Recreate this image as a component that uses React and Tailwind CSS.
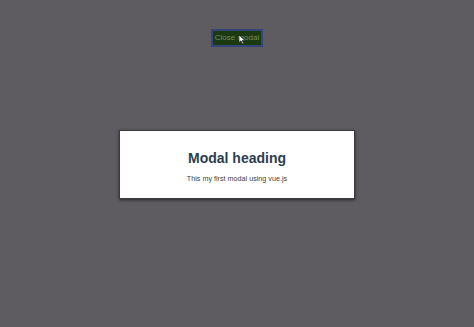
export default function App() {
  return (
    <div
      className="relative h-[327px] w-[474px] overflow-hidden bg-[#5f5c61]"
      style={{ fontFamily: '"Liberation Sans", Arial, sans-serif' }}
    >
      <div className="flex justify-center pt-[29px]">
        <button className="relative h-[18px] w-[52px] border-2 border-[#34457a] bg-[#1c3a12] text-[8px] leading-none text-[#6f8a62]">
          Close modal
          <svg
            className="absolute left-[25px] top-[3px]"
            width="8"
            height="11"
            viewBox="0 0 8 11"
          >
            <path
              d="M1 1 L1 8.5 L3 6.8 L4.5 10 L5.6 9.5 L4.2 6.4 L6.8 6.4 Z"
              fill="#ffffff"
              stroke="#222"
              strokeWidth="0.7"
            />
          </svg>
        </button>
      </div>

      <div className="absolute left-[119px] top-[130px] flex h-[69px] w-[236px] flex-col items-center border border-[#3a3a40] bg-white pt-[20px] shadow-[0_1px_3px_rgba(0,0,0,0.6)]">
        <h1 className="text-[14px] font-bold leading-none text-[#2c3e50]">
          Modal heading
        </h1>
        <p className="mt-[10px] text-[7.2px] leading-none text-[#3a3f48]">
          This my first modal using vue.js
        </p>
      </div>
    </div>
  );
}
